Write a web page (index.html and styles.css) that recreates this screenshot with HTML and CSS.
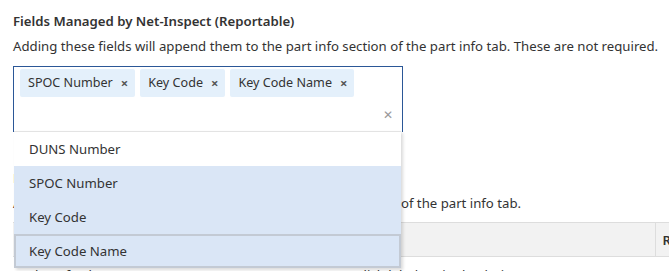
FILE: index.html
```html
<!DOCTYPE html>
<html lang="en">
<head>
  <meta charset="UTF-8" />
  <title>Part Info Fields</title>
  <link rel="stylesheet" href="styles.css">
</head>
<body>
  <div class="page">
    <section class="field-group">
      <h3>Fields Managed by Net-Inspect (Reportable)</h3>
      <p class="hint">Adding these fields will append them to the part info section of the part info tab. These are not required.</p>

      <div class="picker">
        <div class="select">
          <ul class="chips">
            <li class="chip">SPOC Number <span class="chip-x">&times;</span></li>
            <li class="chip">Key Code <span class="chip-x">&times;</span></li>
            <li class="chip">Key Code Name <span class="chip-x">&times;</span></li>
          </ul>
          <div class="search-line">
            <span class="clear">&#x2715;</span>
          </div>
        </div>

        <!-- open options list -->
        <ul class="options">
          <li>DUNS Number</li>
          <li class="selected">SPOC Number</li>
          <li class="selected">Key Code</li>
          <li class="selected focused">Key Code Name</li>
        </ul>
      </div>
    </section>

    <section class="field-group second">
      <h3>Fields Managed by Customer</h3>
      <p class="hint">Adding these fields will append them to the user fields section of the part info tab.</p>

      <table class="fields-table">
        <thead>
          <tr><th class="col-name">Name</th><th class="col-r">Required</th></tr>
        </thead>
        <tbody>
          <tr>
            <td class="col-name"><span class="c1">Value of Value</span><span class="c2">English label</span><span class="c3">Single Choice</span></td>
            <td class="col-r">No</td>
          </tr>
        </tbody>
      </table>
    </section>
  </div>
</body>
</html>
```

FILE: styles.css
```css
* { box-sizing: border-box; }
body, html {
  margin: 0; height: 100%; overflow: hidden;
  font-family: 'Segoe UI', 'Noto Sans', sans-serif;
  font-size: 13.2px; color: #333; background: #fff;
}
.page { padding: 0 0 0 13px; }
ul { margin: 0; padding: 0; list-style: none; }

h3 {
  margin: 11px 0 0; font-size: 13.2px; line-height: 20px;
  font-weight: 600; color: #333;
}
.hint { margin: 5px 0 0; line-height: 20px; white-space: nowrap; }

.picker { position: relative; width: 390px; margin-top: 10px; }
.select {
  border: 1px solid #2b5797; border-bottom: none;
  height: 66px; padding: 2px 6px 0;
}
.chips { display: flex; gap: 5px; }
.chip {
  display: flex; align-items: center;
  height: 28px; padding: 0 7px 0 8px;
  background: #e4f0fb; border-radius: 2px;
  font-size: 12.6px; line-height: 28px;
}
.chip-x {
  margin-left: 8px; font-size: 13px; font-weight: bold; color: #555;
}
.search-line {
  display: flex; justify-content: flex-end; align-items: center;
  height: 35px; padding-right: 3px;
}
.clear { font-size: 12px; color: #999; }

/* Dropdown list */
.options {
  position: absolute; left: 1px; top: 65px; z-index: 2;
  width: 387px; background: #fff;
  border-top: 1px solid #e3e3e3;
  box-shadow: 2px 2px 3px rgba(0,0,0,0.15);
}
.options li {
  height: 34px; line-height: 34px; padding-left: 15px;
}
.options li.selected { background: #dae6f6; }
.options li.focused {
  border: 2px solid #c3cad4; line-height: 30px; padding-left: 13px;
}

.second h3 { margin-top: 36px; }
.fields-table {
  width: 100%; margin-top: 9px;
  border-collapse: collapse; table-layout: fixed;
}
.fields-table th {
  height: 34px; background: #f2f2f2; text-align: left;
  font-weight: 600; padding: 0 7px;
  border-top: 1px solid #ddd; border-bottom: 1px solid #ddd;
}
.fields-table th + th { border-left: 1px solid #ddd; }
.col-name { width: 642px; }
.fields-table td { padding: 9px 7px; white-space: nowrap; }
.c1 { display: inline-block; width: 320px; }
.c2 { display: inline-block; width: 95px; }
```
